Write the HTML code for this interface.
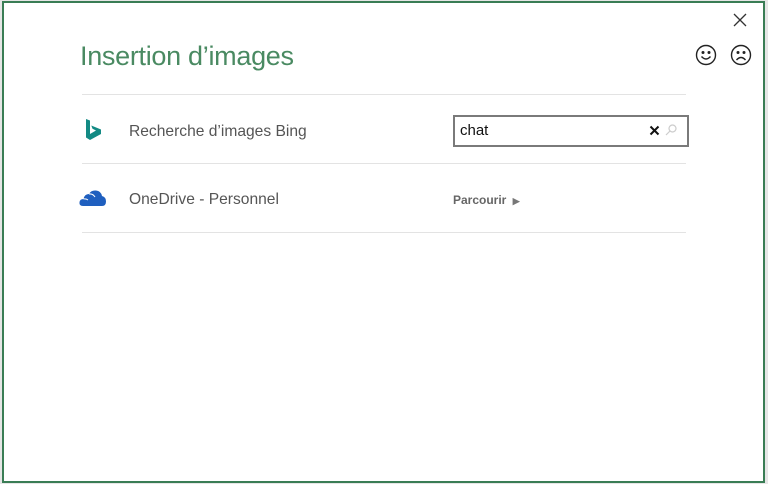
<!DOCTYPE html>
<html><head><meta charset="utf-8"><style>
html,body{margin:0;padding:0;width:768px;height:484px;overflow:hidden;background:#e6e6e6;font-family:"Liberation Sans",sans-serif}
.dlg{position:absolute;left:2px;top:1px;width:759px;height:478px;border:2px solid #3a7d55;background:#fff}
.t{position:absolute;left:76px;top:38px;font-size:27px;color:#4a8a62;font-weight:300;letter-spacing:-0.3px}
.hr{position:absolute;left:78px;width:604px;height:1px;background:#e3e3e3}
.lbl{position:absolute;left:125px;font-size:15.6px;color:#555}
.search{position:absolute;left:449px;top:112px;width:232px;height:28px;border:2px solid #7a7a7a;background:#fff}
.search span{position:absolute;left:5px;top:5px;font-size:15px;color:#111}
.par{position:absolute;left:449px;top:190px;font-size:12px;color:#666;font-weight:bold}
</style></head><body>
<div class="dlg">
<svg style="position:absolute;left:729px;top:10px" width="14" height="14"><path d="M1 1L13 13M13 1L1 13" stroke="#333" stroke-width="1.3"/></svg>
<svg style="position:absolute;left:691px;top:41px" width="22" height="22" fill="none" stroke="#222" stroke-width="1.4"><circle cx="11" cy="11" r="9.5"/><circle cx="8" cy="8.5" r=".8" fill="#222"/><circle cx="14" cy="8.5" r=".8" fill="#222"/><path d="M6.5 12.5Q11 17.5 15.5 12.5"/></svg>
<svg style="position:absolute;left:726px;top:41px" width="22" height="22" fill="none" stroke="#222" stroke-width="1.4"><circle cx="11" cy="11" r="9.5"/><circle cx="8" cy="8.5" r=".8" fill="#222"/><circle cx="14" cy="8.5" r=".8" fill="#222"/><path d="M6.5 16Q11 11 15.5 16"/></svg>
<div class="t">Insertion d’images</div>
<div class="hr" style="top:91px"></div>
<svg style="position:absolute;left:81px;top:115px" width="18" height="24"><path d="M1 1L5 2.5V16L11 12.5L7.5 10.8L6.3 7.5L16 11.5V16L5 22L1 19.5Z" fill="#138a84"/></svg>
<div class="lbl" style="top:120px">Recherche d’images Bing</div>
<div class="search"><span>chat</span>
<svg style="position:absolute;left:194px;top:8px" width="11" height="11"><path d="M1.5 1.5L9.5 9.5M9.5 1.5L1.5 9.5" stroke="#111" stroke-width="2"/></svg>
<svg style="position:absolute;left:210px;top:7px" width="12" height="12" fill="none" stroke="#ccc" stroke-width="1.2"><circle cx="7.5" cy="4.5" r="3.5"/><path d="M5 7L1 11"/></svg>
</div>
<div class="hr" style="top:160px"></div>
<svg style="position:absolute;left:75px;top:186px" width="28" height="18"><path d="M4 17Q0 17 0.5 13Q1 10 4.5 10Q5.5 5 10 5Q12 1 17 1.5Q22 2 23 7Q27 8 27 12.5Q27 17 23 17Z" fill="#1f5fbf"/><path d="M4.5 10Q7 9.5 9 11" stroke="#fff" stroke-width="1" fill="none"/><path d="M10 5Q14 4.5 16 8" stroke="#fff" stroke-width="1" fill="none"/></svg>
<div class="lbl" style="top:188px">OneDrive - Personnel</div>
<div class="par">Parcourir <span style="font-size:9px;color:#777;margin-left:3px">&#9654;</span></div>
<div class="hr" style="top:229px"></div>
</div>
</body></html>
